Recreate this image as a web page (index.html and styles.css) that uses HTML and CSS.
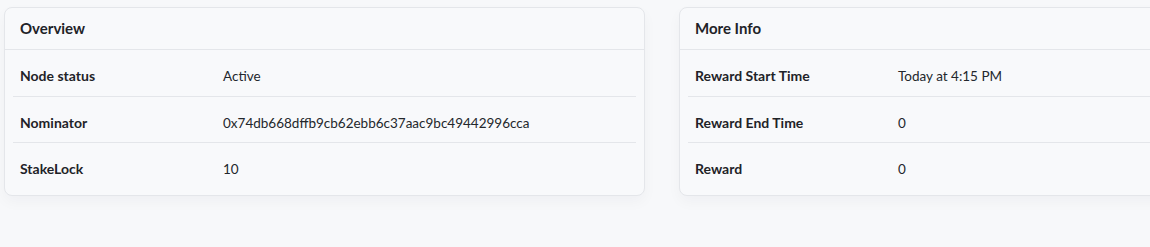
FILE: index.html
```html
<!DOCTYPE html>
<html>
<head>
<meta charset="utf-8">
<link rel="stylesheet" href="styles.css">
</head>
<body>
<div class="page">
  <section class="card">
    <header class="card-head">Overview</header>
    <div class="rows">
      <div class="row"><span class="label">Node status</span><span class="value">Active</span></div>
      <div class="row"><span class="label">Nominator</span><span class="value">0x74db668dffb9cb62ebb6c37aac9bc49442996cca</span></div>
      <div class="row"><span class="label">StakeLock</span><span class="value">10</span></div>
    </div>
  </section>
  <section class="card">
    <header class="card-head">More Info</header>
    <div class="rows">
      <div class="row"><span class="label">Reward Start Time</span><span class="value">Today at 4:15 PM</span></div>
      <div class="row"><span class="label">Reward End Time</span><span class="value">0</span></div>
      <div class="row"><span class="label">Reward</span><span class="value">0</span></div>
    </div>
  </section>
</div>
</body>
</html>
```
FILE: styles.css
```css
html, body {
  margin: 0;
  padding: 0;
  background: #f7f8fa;
  overflow: hidden;
}
body {
  font-family: Lato, "Liberation Sans", sans-serif;
  color: #1f2328;
  width: 1150px;
  height: 247px;
}
.page {
  display: flex;
  gap: 34px;
  padding: 7px 0 0 4px;
  width: 1400px;
}
.card {
  flex: 0 0 641px;
  box-sizing: border-box;
  background: #f8f9fb;
  border: 1px solid #e4e6ea;
  border-radius: 8px;
  padding-bottom: 6.5px;
  box-shadow: 0 6px 14px rgba(20, 30, 50, 0.035);
}
.card-head {
  height: 41px;
  line-height: 41px;
  padding: 0 15px;
  font-size: 15px;
  font-weight: 700;
  border-bottom: 1px solid #e4e6ea;
}
.rows {
  padding: 0 8px;
}
.row {
  display: flex;
  padding: 16px 7px 9.5px;
  line-height: 20px;
  font-size: 14px;
  border-bottom: 1px solid #e4e6ea;
}
.row:last-child {
  border-bottom: none;
}
.label {
  flex: 0 0 203px;
  font-weight: 700;
}
.value {
  font-weight: 400;
  font-size: 13.5px;
  color: #23272c;
}
```
